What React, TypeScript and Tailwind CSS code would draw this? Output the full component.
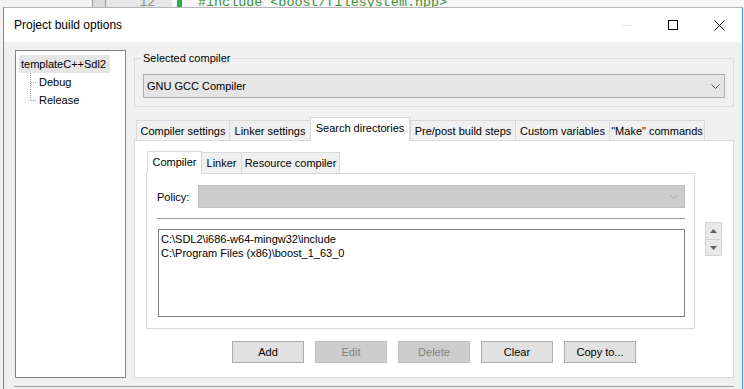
import React from "react";

function Chevron({ color = "#606060" }: { color?: string }) {
  return (
    <svg width="9" height="5" viewBox="0 0 9 5" className="shrink-0">
      <polyline points="0.5,0.5 4.5,4.5 8.5,0.5" fill="none" stroke={color} strokeWidth="1" />
    </svg>
  );
}

function Tab({ label, w, selected, last }: { label: string; w: number; selected?: boolean; last?: boolean }) {
  return (
    <div
      style={{ width: w }}
      className={
        selected
          ? "h-[24px] mb-[-1px] relative z-10 bg-white border-l border-t border-r border-[#d9d9d9] flex items-center justify-center pb-[3px] whitespace-nowrap"
          : "h-[20px] bg-[#f0f0f0] border-l border-t border-[#d9d9d9] flex items-center justify-center whitespace-nowrap " +
            (last ? "border-r" : "")
      }
    >
      {label}
    </div>
  );
}

function InnerTab({ label, w, selected }: { label: string; w: number; selected?: boolean }) {
  return (
    <div
      style={{ width: w }}
      className={
        selected
          ? "h-[23px] mb-[-1px] relative z-10 bg-white border-l border-t border-r border-[#d9d9d9] flex items-center justify-center pb-[2px] whitespace-nowrap"
          : "h-[21px] bg-[#f0f0f0] border-t border-r border-[#d9d9d9] flex items-center justify-center whitespace-nowrap"
      }
    >
      {label}
    </div>
  );
}

function Btn({ label, disabled }: { label: string; disabled?: boolean }) {
  return (
    <div
      className={
        disabled
          ? "w-[72px] h-[22px] bg-[#cccccc] border border-[#bfbfbf] text-[#838383] flex items-center justify-center"
          : "w-[72px] h-[22px] bg-[#e1e1e1] border border-[#adadad] text-black flex items-center justify-center"
      }
    >
      {label}
    </div>
  );
}

export default function App() {
  return (
    <div className="w-[744px] h-[389px] overflow-hidden flex flex-col bg-[#f0f0f0] font-['Liberation_Sans',Arial,sans-serif] text-[11px] leading-[14px] text-black">
      {/* editor strip behind the dialog */}
      <div className="h-[7px] shrink-0 flex overflow-hidden bg-[#f7f7f7]">
        <div className="w-[92px] bg-[#f2f2f2]" />
        <div className="w-[14px] bg-[#dcdcdc] border-x border-[#9a9a9a]" />
        <div className="w-[66px] bg-[#e6e6e6] flex justify-end pr-[17px]">
          <span className="font-['Liberation_Mono',monospace] text-[13px] leading-[13px] mt-[-4px] text-[#8a8a8a]">12</span>
        </div>
        <div className="w-[5px] ml-[5px] bg-[#22b14c]" />
        <div className="pl-[16px]">
          <span className="block font-['Liberation_Mono',monospace] text-[13.4px] leading-[13px] mt-[-4px] text-[#3f8f3f] whitespace-pre">
            #include &lt;boost/filesystem.hpp&gt;
          </span>
        </div>
      </div>

      {/* window */}
      <div className="flex-1 min-h-0 ml-[3px] w-[740px] flex flex-col border-x border-[#4d92d8] border-t border-t-[#b5b5b5]">
        {/* title bar */}
        <div className="h-[34px] shrink-0 bg-white flex items-center pl-[10px]">
          <span className="text-[12px] leading-[16px]">Project build options</span>
          <div className="ml-auto flex h-full">
            <div className="w-[46px] h-full flex items-center justify-center">
              <svg width="10" height="10" viewBox="0 0 10 10">
                <line x1="0" y1="5.5" x2="10" y2="5.5" stroke="#e6e6e6" strokeWidth="1" />
              </svg>
            </div>
            <div className="w-[46px] h-full flex items-center justify-center">
              <svg width="10" height="10" viewBox="0 0 10 10">
                <rect x="0.5" y="0.5" width="9" height="9" fill="none" stroke="#000" strokeWidth="1" />
              </svg>
            </div>
            <div className="w-[46px] h-full flex items-center justify-center">
              <svg width="11" height="11" viewBox="0 0 11 11">
                <line x1="0.5" y1="0.5" x2="10.5" y2="10.5" stroke="#000" strokeWidth="1" />
                <line x1="10.5" y1="0.5" x2="0.5" y2="10.5" stroke="#000" strokeWidth="1" />
              </svg>
            </div>
          </div>
        </div>

        {/* body */}
        <div className="flex-1 flex flex-col pl-[11px] pr-[8px] pt-[8px]">
          <div className="flex gap-[8px] items-start">
            {/* tree */}
            <div className="w-[111px] h-[328px] shrink-0 bg-white border border-[#828282] pt-[4px] pl-[3px]">
              <div className="w-[91px] h-[18px] bg-[#e5e5e5] flex items-center pl-[2px] whitespace-nowrap">templateC++Sdl2</div>
              <div className="flex">
                <svg width="17" height="36" viewBox="0 0 17 36" className="shrink-0 ml-[11px]">
                  <line x1="0.5" y1="0" x2="0.5" y2="27" stroke="#a0a0a0" strokeDasharray="1 1" />
                  <line x1="1" y1="9.5" x2="7" y2="9.5" stroke="#a0a0a0" strokeDasharray="1 1" />
                  <line x1="1" y1="27.5" x2="7" y2="27.5" stroke="#a0a0a0" strokeDasharray="1 1" />
                </svg>
                <div className="flex flex-col ml-[-8px]">
                  <div className="h-[18px] flex items-center">Debug</div>
                  <div className="h-[18px] flex items-center">Release</div>
                </div>
              </div>
            </div>

            {/* right column */}
            <div className="w-[600px] flex flex-col">
              <fieldset className="border border-[#dcdcdc] px-[8px] pb-[8px]">
                <legend className="px-[2px] ml-[-2px] leading-[16px]">Selected compiler</legend>
                <div className="mt-[8px] h-[24px] bg-[#e5e5e5] border border-[#acacac] flex items-center pl-[3px] pr-[4px]">
                  <span>GNU GCC Compiler</span>
                  <div className="ml-auto">
                    <Chevron color="#555555" />
                  </div>
                </div>
              </fieldset>

              {/* tabs */}
              <div className="mt-[10px] h-[23px] flex items-end pl-[2px]">
                <Tab label="Compiler settings" w={93} />
                <Tab label="Linker settings" w={81} />
                <Tab label="Search directories" w={100} selected />
                <Tab label="Pre/post build steps" w={105} />
                <Tab label="Custom variables" w={94} />
                <Tab label={'"Make" commands'} w={96} last />
              </div>

              {/* tab pane */}
              <div className="h-[238px] bg-white border border-[#d9d9d9] flex flex-col">
                <div className="flex pl-[11px] pt-[10px]">
                  <div className="w-[549px] flex flex-col">
                    <div className="h-[22px] flex items-end pl-[1px]">
                      <InnerTab label="Compiler" w={55} selected />
                      <InnerTab label="Linker" w={40} />
                      <InnerTab label="Resource compiler" w={98} />
                    </div>
                    <div className="h-[156px] border border-[#d9d9d9] flex flex-col pl-[10px] pr-[9px] pt-[11px]">
                      <div className="flex items-center h-[23px]">
                        <div className="w-[41px]">Policy:</div>
                        <div className="flex-1 h-[23px] bg-[#cccccc] border border-[#bfbfbf] flex items-center justify-end pr-[6px]">
                          <Chevron color="#a8a8a8" />
                        </div>
                      </div>
                      <div className="mt-[10px] h-[1px] bg-[#a0a0a0]" />
                      <div className="mt-[10px] ml-[1px] h-[88px] border border-[#828282] bg-white pl-[2px] pt-[2px] whitespace-nowrap">
                        <div className="h-[14px]">C:\SDL2\i686-w64-mingw32\include</div>
                        <div className="h-[14px]">C:\Program Files (x86)\boost_1_63_0</div>
                      </div>
                    </div>
                  </div>
                  <div className="ml-[10px] mt-[71px] w-[17px] flex flex-col">
                    <div className="h-[18px] bg-[#e8e8e8] border border-[#d4d4d4] flex items-center justify-center">
                      <svg width="7" height="4" viewBox="0 0 7 4">
                        <polygon points="3.5,0 7,4 0,4" fill="#606060" />
                      </svg>
                    </div>
                    <div className="h-[17px] mt-[-1px] bg-[#e8e8e8] border border-[#d4d4d4] flex items-center justify-center">
                      <svg width="7" height="4" viewBox="0 0 7 4">
                        <polygon points="0,0 7,0 3.5,4" fill="#606060" />
                      </svg>
                    </div>
                  </div>
                </div>
                <div className="mt-[12px] flex justify-center gap-[11px]">
                  <Btn label="Add" />
                  <Btn label="Edit" disabled />
                  <Btn label="Delete" disabled />
                  <Btn label="Clear" />
                  <Btn label="Copy to..." />
                </div>
              </div>
            </div>
          </div>
          <div className="mt-[8px] ml-[-1px] w-[720px] border-t border-[#a0a0a0] flex-1" />
        </div>
      </div>
    </div>
  );
}
